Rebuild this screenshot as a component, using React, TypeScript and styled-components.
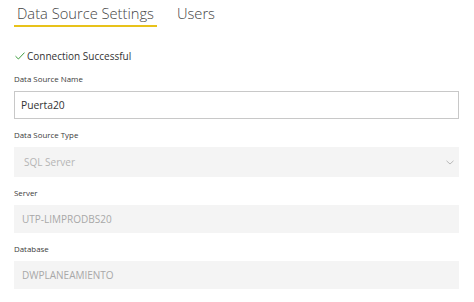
import styled, { createGlobalStyle } from 'styled-components';

const GlobalStyle = createGlobalStyle`
  body {
    margin: 0;
    background: #ffffff;
    font-family: 'Open Sans', 'Noto Sans', sans-serif;
  }
`;

const fields = [
  { label: 'Server', value: 'UTP-LIMPRODBS20' },
  { label: 'Database', value: 'DWPLANEAMIENTO' },
];

const App: React.FC = () => {
  return (
    <Page>
      <GlobalStyle />
      <Tabs>
        <Tab active>Data Source Settings</Tab>
        <Tab>Users</Tab>
      </Tabs>
      <Status>
        <svg width="10" height="8" viewBox="0 0 10 8">
          <path d="M0.5 4.2 L3.4 7 L9.5 0.6" fill="none" stroke="#3c9c3c" strokeWidth="1" />
        </svg>
        Connection Successful
      </Status>
      <Field>
        <Label>Data Source Name</Label>
        <TextInput>Puerta20</TextInput>
      </Field>
      <Field>
        <Label>Data Source Type</Label>
        <Select>
          SQL Server
          <svg width="8" height="5" viewBox="0 0 8 5">
            <path d="M0.5 0.8 L4 4 L7.5 0.8" fill="none" stroke="#b8b8b8" strokeWidth="1" />
          </svg>
        </Select>
      </Field>
      {fields.map((f) => (
        <Field key={f.label}>
          <Label>{f.label}</Label>
          <Disabled>{f.value}</Disabled>
        </Field>
      ))}
    </Page>
  );
};

const Page = styled.div`
  width: 474px;
  height: 302px;
  box-sizing: border-box;
  padding: 0 15px 0 14px;
  overflow: hidden;
`;
const Tabs = styled.div`
  display: flex;
  gap: 17px;
  height: 28px;
`;
const Tab = styled.div<{ active?: boolean }>`
  padding: 2px 3px 0;
  height: 23px;
  font-size: 14.7px;
  font-weight: 300;
  color: #444;
  border-bottom: 2px solid ${(p) => (p.active ? '#e8c21a' : 'transparent')};
  line-height: 22px;
`;
const Status = styled.div`
  display: flex;
  align-items: center;
  gap: 2px;
  margin-top: 21px;
  font-size: 10px;
  color: #333;
  line-height: 14px;
  padding-left: 1px;
`;
const Field = styled.div`
  display: flex;
  flex-direction: column;
  margin-top: 10px;
`;
const Label = styled.div`
  font-size: 7.9px;
  line-height: 12px;
  color: #3a3a3a;
  margin-bottom: 6px;
`;
const TextInput = styled.div`
  height: 28px;
  box-sizing: border-box;
  border: 1px solid #c8c8c8;
  padding: 0 6px;
  display: flex;
  align-items: center;
  font-size: 10.3px;
  color: #333;
`;
const Select = styled.div`
  height: 30px;
  box-sizing: border-box;
  background: #f4f4f4;
  padding: 0 5px 0 10px;
  display: flex;
  align-items: center;
  justify-content: space-between;
  font-size: 10px;
  color: #b4b4b4;
`;
const Disabled = styled.div`
  height: 28px;
  box-sizing: border-box;
  background: #f4f4f4;
  padding: 0 8px;
  display: flex;
  align-items: center;
  font-size: 10px;
  color: #a8a8a8;
`;

export default App;
